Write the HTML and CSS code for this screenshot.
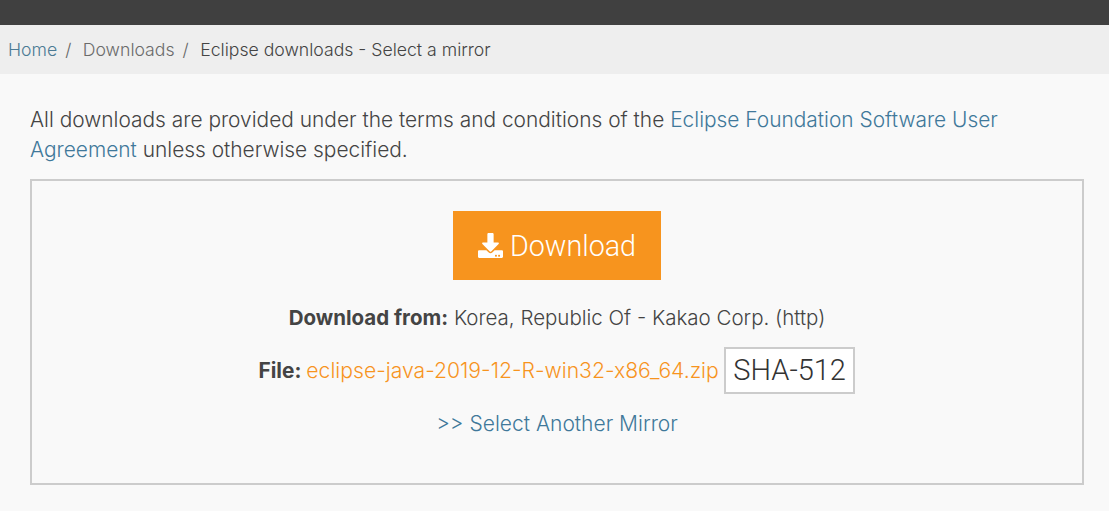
FILE: index.html
```html
<!DOCTYPE html>
<html lang="en">
<head>
    <meta charset="UTF-8">
    <meta name="viewport" content="width=device-width, initial-scale=1.0">
    <title>Eclipse downloads - Select a mirror</title>
    <link rel="stylesheet" href="styles.css">
</head>
<body>
    <div class="topbar"></div>
    <ol class="breadcrumb">
        <li class="breadcrumb__item"><a class="breadcrumb__link" href="#">Home</a><span class="breadcrumb__sep">/</span></li>
        <li class="breadcrumb__item"><a class="breadcrumb__link breadcrumb__link--gray" href="#">Downloads</a><span class="breadcrumb__sep">/</span></li>
        <li class="breadcrumb__item">Eclipse downloads - Select a mirror</li>
    </ol>
    <main class="content">
        <p class="content__intro">All downloads are provided under the terms and conditions of the <a class="link" href="#">Eclipse Foundation Software User Agreement</a> unless otherwise specified.</p>
        <div class="download">
            <a class="download__button" href="#">
                <svg class="download__icon" viewBox="0 0 512 512" aria-hidden="true">
                    <path fill="currentColor" d="M216 0h80c13 0 24 11 24 24v168h88c18 0 27 21 14 34L270 378c-8 8-20 8-28 0L90 226c-13-13-4-34 14-34h88V24c0-13 11-24 24-24zM512 376v112c0 13-11 24-24 24H24c-13 0-24-11-24-24V376c0-13 11-24 24-24h147l49 49c20 20 52 20 72 0l49-49h147c13 0 24 11 24 24zM388 464c0-11-9-20-20-20s-20 9-20 20 9 20 20 20 20-9 20-20zm64 0c0-11-9-20-20-20s-20 9-20 20 9 20 20 20 20-9 20-20z"/>
                </svg>
                Download
            </a>
            <p class="download__line download__line--from"><strong>Download from:</strong> Korea, Republic Of - Kakao Corp. (http)</p>
            <p class="download__line download__line--file">
                <strong>File:</strong> <a class="link link--orange" href="#">eclipse-java-2019-12-R-win32-x86_64.zip</a>
                <span class="download__sha">SHA-512</span>
            </p>
            <p class="download__line download__line--mirror"><a class="link" href="#">&gt;&gt; Select Another Mirror</a></p>
        </div>
    </main>
</body>
</html>
```

FILE: styles.css
```css
* {
    margin: 0;
    padding: 0;
    box-sizing: border-box;
}

body {
    height: 511px;
    overflow: hidden;
    background: #f9f9f9;
    color: #444;
    font-family: "Inter", "Liberation Sans", sans-serif;
    font-size: 20.9px;
    font-weight: 300;
}

a {
    text-decoration: none;
}

.topbar {
    height: 25px;
    background: #404040;
}

.breadcrumb {
    display: flex;
    align-items: center;
    height: 49px;
    padding-left: 8px;
    list-style: none;
    background: #eee;
    font-size: 17.65px;
}

.breadcrumb__link {
    color: #4c7a94;
}

.breadcrumb__link--gray {
    color: #6b6b6b;
}

.breadcrumb__sep {
    margin: 0 11.5px 0 8px;
    color: #666;
}

.content {
    padding: 31px 25px 0 30px;
}

.content__intro {
    line-height: 30px;
}

.link {
    color: #40789a;
}

.link--orange {
    color: #f7941e;
}

.download {
    display: flex;
    flex-direction: column;
    align-items: center;
    height: 306px;
    margin-top: 14px;
    padding-top: 30px;
    border: 2px solid #ccc;
}

.download__button {
    display: flex;
    align-items: center;
    justify-content: center;
    gap: 7px;
    width: 208px;
    height: 69px;
    background: #f7941e;
    color: #fff;
    font-family: "Roboto", sans-serif;
    font-size: 28.7px;
    font-weight: 300;
}

.download__icon {
    width: 25px;
    height: 25px;
}

.download__line {
    font-size: 20.5px;
}

.download__line strong {
    font-weight: 700;
}

.download__line--from {
    margin-top: 25px;
    line-height: 26px;
}

.download__line--file {
    display: flex;
    align-items: center;
    gap: 5px;
    margin-top: 16px;
    font-size: 21.15px;
}

.download__line--file strong {
    font-size: 20.8px;
}

.download__sha {
    display: block;
    height: 47px;
    padding: 0 7.5px;
    border: 2px solid #ccc;
    background: #fff;
    color: #333;
    font-family: "Roboto", sans-serif;
    font-size: 29px;
    line-height: 43px;
}

.download__line--mirror {
    margin-top: 17px;
    font-size: 21px;
}
```
